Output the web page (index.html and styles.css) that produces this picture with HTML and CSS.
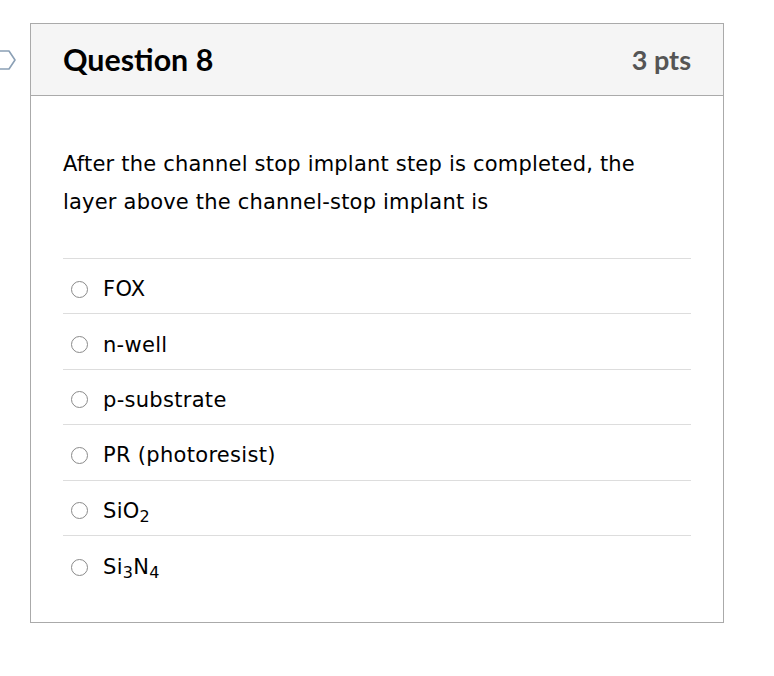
FILE: index.html
```html
<!DOCTYPE html>
<html>
<head>
<meta charset="utf-8">
<link rel="stylesheet" href="styles.css">
</head>
<body>
<div class="page">
  <div class="marker">
    <svg width="20" height="22" viewBox="0 0 20 22"><path d="M-6 2 H9 L15 11 L9 20 H-6" fill="none" stroke="#8ba0b5" stroke-width="1.6" stroke-linejoin="round"/></svg>
  </div>
  <div class="card">
    <div class="card-header">
      <h2 class="title">Question 8</h2>
      <span class="pts">3 pts</span>
    </div>
    <div class="card-body">
      <p class="question">After the channel stop implant step is completed, the layer above the channel-stop implant is</p>
      <ul class="answers">
        <li class="answer"><span class="radio"></span><span class="label">FOX</span></li>
        <li class="answer"><span class="radio"></span><span class="label">n-well</span></li>
        <li class="answer"><span class="radio"></span><span class="label">p-substrate</span></li>
        <li class="answer"><span class="radio"></span><span class="label">PR (photoresist)</span></li>
        <li class="answer"><span class="radio"></span><span class="label">SiO<sub>2</sub></span></li>
        <li class="answer"><span class="radio"></span><span class="label">Si<sub>3</sub>N<sub>4</sub></span></li>
      </ul>
    </div>
  </div>
</div>
</body>
</html>
```

FILE: styles.css
```css
html, body {
  margin: 0;
  padding: 0;
  background: #ffffff;
}
.page {
  position: relative;
  padding: 23px 0 0 30px;
  width: 694px;
}
.marker {
  position: absolute;
  left: 0;
  top: 49px;
  width: 20px;
  height: 22px;
}
.marker svg { display: block; }
.card {
  border: 1px solid #aaaaaa;
  background: #fff;
}
.card-header {
  display: flex;
  justify-content: space-between;
  align-items: center;
  height: 71px;
  padding: 0 32px;
  background: #f5f5f5;
  border-bottom: 1px solid #aaaaaa;
  font-family: Lato, "Open Sans", sans-serif;
}
.title {
  margin: 0;
  font-size: 30.4px;
  font-weight: 700;
  color: #000;
  position: relative;
  top: -1px;
}
.pts {
  font-size: 27px;
  font-weight: 700;
  color: #555555;
}
.card-body {
  padding: 49px 32px 29px 32px;
  font-family: "DejaVu Sans", Verdana, sans-serif;
  color: #000;
}
.question {
  margin: 0 0 37px 0;
  font-size: 21px;
  letter-spacing: 0.2px;
  line-height: 38px;
}
.answers {
  list-style: none;
  margin: 0;
  padding: 0;
}
.answer {
  box-sizing: border-box;
  display: flex;
  align-items: center;
  gap: 15px;
  height: 55.4px;
  padding: 6px 0 0 8px;
  border-top: 1px solid #dddddd;
  font-size: 21px;
  letter-spacing: 0.3px;
}
.radio {
  width: 15px;
  height: 15px;
  border: 1.5px solid #8a8a8a;
  border-radius: 50%;
  flex: none;
}
.label sub {
  font-size: 16px;
  vertical-align: -4px;
  line-height: 0;
}
.answer:last-child { height: 58px; }
```
